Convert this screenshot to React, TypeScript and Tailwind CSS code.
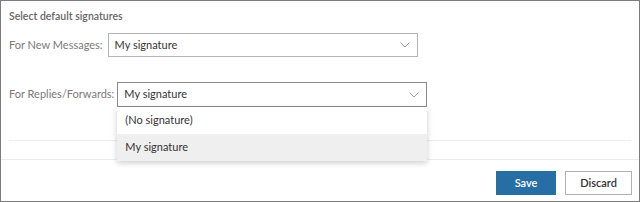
// Panel de firmas por defecto, con el desplegable de Replies/Forwards abierto.

import React from "react";

function Chevron() {
  return (
    <svg width="10" height="6" viewBox="0 0 10 6" className="shrink-0">
      <path d="M0.5 0.5 L5 5 L9.5 0.5" fill="none" stroke="#9a9a9a" strokeWidth="1" />
    </svg>
  );
}

type SelectBoxProps = {
  value: string;
  focused?: boolean;
  className?: string;
};

function SelectBox({ value, focused, className = "" }: SelectBoxProps) {
  return (
    <div
      className={`w-[310px] flex items-center justify-between pl-[6px] pr-[7px] bg-white border ${
        focused ? "border-[#8a8a8a]" : "border-[#b4b4b4]"
      } ${className}`}
    >
      <span className="text-[11px] text-[#333333]">{value}</span>
      <Chevron />
    </div>
  );
}

export default function App() {
  return (
    <div className="w-[640px] h-[202px] border border-[#7d7d7d] bg-white flex flex-col font-['Lato',sans-serif]">
      <div className="h-[158px] px-2 pt-[7px]">
        <div className="border-b border-[#ececec] h-[133px]">
          <div className="text-[10.5px] leading-4 font-semibold text-[#666666]">
            Select default signatures
          </div>

          <div className="flex items-center gap-[5px] mt-[9px]">
            <span className="text-[11px] text-[#7a7a7a]">For New Messages:</span>
            <SelectBox value="My signature" className="h-[24px]" />
          </div>

          <div className="flex items-center gap-[3px] mt-[25px]">
            <span className="text-[11px] text-[#7a7a7a]">For Replies/Forwards:</span>
            <div className="relative">
              <SelectBox value="My signature" focused className="h-[25px]" />
              <ul className="absolute left-0 top-full z-10 w-[310px] bg-white shadow-[0_2px_6px_rgba(0,0,0,0.2)]">
                <li className="h-[27px] flex items-center px-2 text-[11px] text-[#333333]">
                  (No signature)
                </li>
                <li className="h-[27px] flex items-center px-2 text-[11px] text-[#333333] bg-[#efefef]">
                  My signature
                </li>
              </ul>
            </div>
          </div>
        </div>
      </div>

      <div className="flex-1 border-t border-[#ececec] flex justify-end items-start gap-[9px] pr-[7px] pt-[11px]">
        <button className="w-[60px] h-[24px] bg-[#276ea5] text-white text-[11px] font-semibold">
          Save
        </button>
        <button className="w-[67px] h-[24px] bg-white border border-[#b0b0b0] text-[#333333] text-[11px] font-semibold">
          Discard
        </button>
      </div>
    </div>
  );
}
